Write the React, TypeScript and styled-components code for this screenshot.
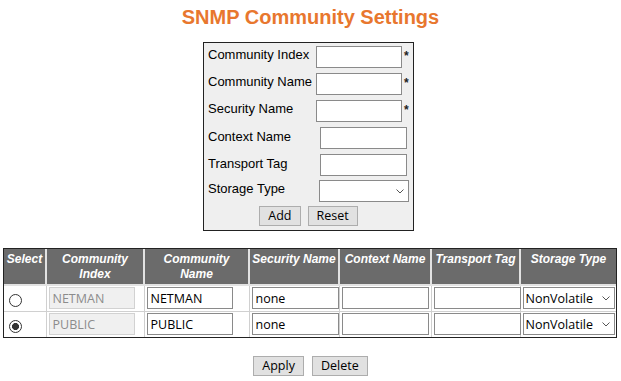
import React from "react";
import styled, { createGlobalStyle } from "styled-components";

const Global = createGlobalStyle`
  html, body { margin: 0; padding: 0; background: #ffffff; }
  body { font-family: "Liberation Sans", Arial, sans-serif; color: #000; }
`;

const Page = styled.div`
  display: flex;
  flex-direction: column;
  align-items: center;
  width: 621px;
`;

const Title = styled.h1`
  margin: 5px 0 13px;
  font: bold 20px/24px "Liberation Sans", Arial, sans-serif;
  color: #e8772e;
  text-align: center;
`;

const FormBox = styled.div`
  box-sizing: border-box;
  width: 211px;
  margin-right: 4px;
  border: 1px solid #222;
  background: #efefef;
  padding: 0 0 2px;
  display: grid;
  grid-template-columns: 110px 99px;
  grid-template-rows: 27px 27px 27px 28px 26px 25px 25px;
`;

const Label = styled.div`
  display: flex;
  align-items: center;
  padding: 0 0 4px 4px;
  font-size: 13px;
  white-space: nowrap;
`;

const Field = styled.div`
  display: flex;
  align-items: center;
  justify-content: center;
`;

const Star = styled.span`
  width: 7px;
  margin-left: 2px;
  font: bold 12px "Liberation Sans", Arial, sans-serif;
  color: #222;
  align-self: center;
  padding-bottom: 2px;
`;

const TextInput = styled.input<{ $w?: number }>`
  box-sizing: border-box;
  width: ${(p) => p.$w ?? 86}px;
  height: 22px;
  margin: 0;
  padding: 0 3px;
  border: 1px solid #8a8a8a;
  background: #fff;
  font: 12.5px "Open Sans", "Liberation Sans", sans-serif;
  color: #000;
  outline: none;
  &:disabled {
    background: #f0f0f0;
    border-color: #d2d2d2;
    color: #8c8c8c;
  }
`;

const SelectWrap = styled.div<{ $w: number }>`
  position: relative;
  width: ${(p) => p.$w}px;
  height: 22px;
`;

const Select = styled.select`
  box-sizing: border-box;
  width: 100%;
  height: 22px;
  margin: 0;
  padding: 0 2px;
  appearance: none;
  -webkit-appearance: none;
  border: 1px solid #8a8a8a;
  border-radius: 0;
  background: #fff;
  font: 12.5px "Open Sans", "Liberation Sans", sans-serif;
  color: #000;
  outline: none;
`;

const Chevron = styled.svg`
  position: absolute;
  right: 5px;
  top: 9px;
  pointer-events: none;
`;

const ButtonRow = styled.div<{ $span?: boolean }>`
  grid-column: ${(p) => (p.$span ? "1 / span 2" : "auto")};
  display: flex;
  justify-content: center;
  align-items: center;
  gap: 7px;
`;

const Button = styled.button`
  box-sizing: border-box;
  height: 20px;
  padding: 0 8px;
  margin: 0;
  border: 1px solid #adadad;
  border-radius: 0;
  background: #e1e1e1;
  font: 12.5px "Open Sans", "Liberation Sans", sans-serif;
  color: #000;
  line-height: 18px;
`;

const TableFrame = styled.div`
  box-sizing: border-box;
  width: 614px;
  margin-top: 17px;
  margin-right: 1px;
  border: 1px solid #222;
`;

const Table = styled.table`
  width: 612px;
  border-collapse: collapse;
  border-style: hidden;
  table-layout: fixed;
`;

const Th = styled.th`
  height: 36px;
  padding: 3px 0 0;
  box-sizing: border-box;
  vertical-align: top;
  background: #6b6b6b;
  color: #fff;
  font: italic bold 12px/15px "Liberation Sans", Arial, sans-serif;
  text-align: center;
  border: 2px solid #e2e2e2;
  white-space: nowrap;
`;

const Td = styled.td`
  height: 26px;
  padding: 0 1px 0 2px;
  box-sizing: border-box;
  vertical-align: middle;
  background: #fff;
  border: 1px solid #d0d0d0;
`;

const Radio = styled.input`
  appearance: none;
  -webkit-appearance: none;
  box-sizing: border-box;
  width: 13px;
  height: 13px;
  margin: 2px 0 0 3px;
  border: 1px solid #333;
  border-radius: 50%;
  background: #fff;
  vertical-align: middle;
  &:checked {
    background: radial-gradient(circle, #333 0 3.2px, #fff 3.8px);
  }
`;

const BottomButtons = styled(ButtonRow)`
  margin-top: 18px;
  gap: 8px;
`;

const ChevronIcon = () => (
  <Chevron width="8" height="5" viewBox="0 0 8 5">
    <path d="M0.5 0.5 L4 4 L7.5 0.5" fill="none" stroke="#555" strokeWidth="1" />
  </Chevron>
);

const rows = [
  { idx: "NETMAN", name: "NETMAN", sec: "none", checked: false },
  { idx: "PUBLIC", name: "PUBLIC", sec: "none", checked: true },
];

export default function App() {
  return (
    <>
      <Global />
      <Page>
        <Title>SNMP Community Settings</Title>
        <FormBox>
          <Label>Community Index</Label>
          <Field>
            <TextInput />
            <Star>*</Star>
          </Field>
          <Label>Community Name</Label>
          <Field>
            <TextInput />
            <Star>*</Star>
          </Field>
          <Label>Security Name</Label>
          <Field>
            <TextInput />
            <Star>*</Star>
          </Field>
          <Label>Context Name</Label>
          <Field>
            <TextInput $w={87} />
          </Field>
          <Label>Transport Tag</Label>
          <Field>
            <TextInput $w={87} />
          </Field>
          <Label>Storage Type</Label>
          <Field>
            <SelectWrap $w={90}>
              <Select defaultValue="">
                <option value=""></option>
                <option value="nv">NonVolatile</option>
                <option value="v">Volatile</option>
              </Select>
              <ChevronIcon />
            </SelectWrap>
          </Field>
          <ButtonRow $span>
            <Button>Add</Button>
            <Button>Reset</Button>
          </ButtonRow>
        </FormBox>

        <TableFrame>
          <Table>
            <colgroup>
              <col style={{ width: 42 }} />
              <col style={{ width: 98 }} />
              <col style={{ width: 105 }} />
              <col style={{ width: 90 }} />
              <col style={{ width: 92 }} />
              <col style={{ width: 89 }} />
              <col style={{ width: 96 }} />
            </colgroup>
            <thead>
              <tr>
                <Th>Select</Th>
                <Th>
                  Community
                  <br />
                  Index
                </Th>
                <Th>
                  Community
                  <br />
                  Name
                </Th>
                <Th>Security Name</Th>
                <Th>Context Name</Th>
                <Th>Transport Tag</Th>
                <Th>Storage Type</Th>
              </tr>
            </thead>
            <tbody>
              {rows.map((r) => (
                <tr key={r.idx}>
                  <Td>
                    <Radio type="radio" name="sel" defaultChecked={r.checked} />
                  </Td>
                  <Td>
                    <TextInput disabled defaultValue={r.idx} />
                  </Td>
                  <Td>
                    <TextInput defaultValue={r.name} />
                  </Td>
                  <Td>
                    <TextInput $w={87} defaultValue={r.sec} />
                  </Td>
                  <Td>
                    <TextInput $w={87} defaultValue="" />
                  </Td>
                  <Td>
                    <TextInput $w={87} defaultValue="" />
                  </Td>
                  <Td>
                    <SelectWrap $w={92}>
                      <Select defaultValue="nv">
                        <option value="nv">NonVolatile</option>
                        <option value="v">Volatile</option>
                      </Select>
                      <ChevronIcon />
                    </SelectWrap>
                  </Td>
                </tr>
              ))}
            </tbody>
          </Table>
        </TableFrame>

        <BottomButtons>
          <Button>Apply</Button>
          <Button>Delete</Button>
        </BottomButtons>
      </Page>
    </>
  );
}
